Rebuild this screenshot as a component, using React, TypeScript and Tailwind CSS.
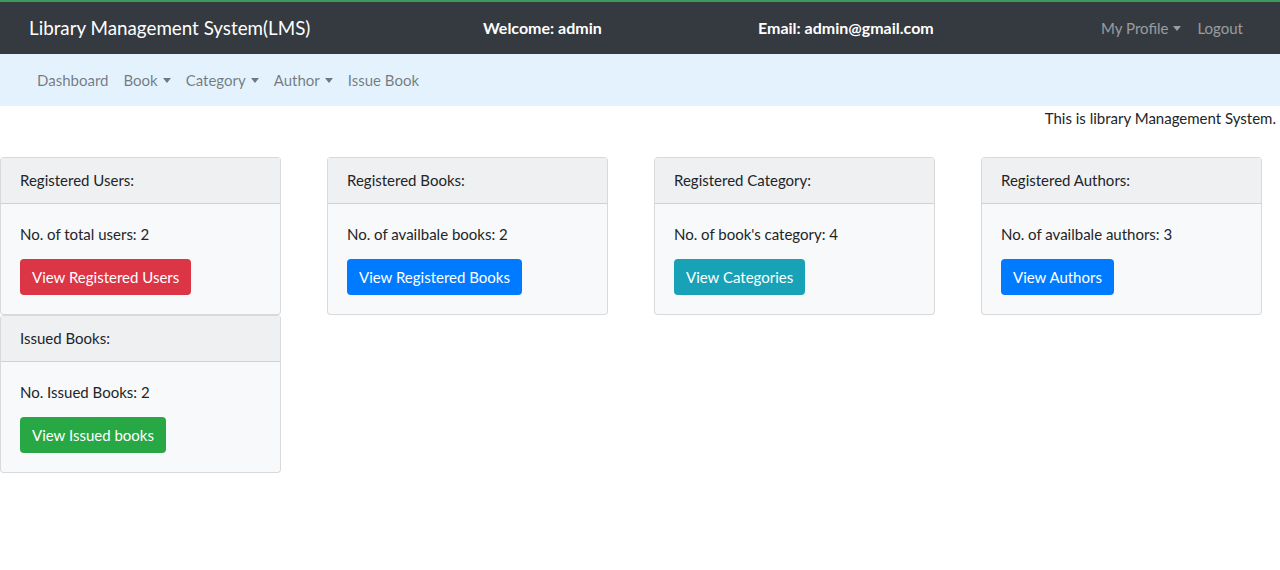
import React from "react";

const font = { fontFamily: "Lato, 'Open Sans', sans-serif" };

function Caret({ light }: { light?: boolean }) {
  return (
    <span
      className={`ml-[5px] inline-block h-0 w-0 border-x-[4.5px] border-t-[5px] border-x-transparent align-[3px] ${
        light ? "border-t-white/50" : "border-t-black/50"
      }`}
    />
  );
}

type CardProps = {
  title: string;
  text: string;
  button: string;
  color: string;
};

function StatCard({ title, text, button, color }: CardProps) {
  return (
    <div className="w-[281px] rounded-[4px] border border-black/[0.125] bg-[#f8f9fa]">
      <div className="h-[46px] border-b border-black/[0.125] bg-[#eff0f2] px-[19px] pt-[11px] text-[15px] leading-[22px] text-[#212529]">
        {title}
      </div>
      <div className="px-[19px] pb-[19px] pt-[19px]">
        <p className="text-[15px] leading-[22px] text-[#212529]">{text}</p>
        <button
          className={`mt-[14px] h-[36px] rounded-[4px] px-[12px] text-[15px] text-white ${color}`}
        >
          {button}
        </button>
      </div>
    </div>
  );
}

export default function App() {
  const cards: CardProps[] = [
    { title: "Registered Books:", text: "No. of availbale books: 2", button: "View Registered Books", color: "bg-[#007bff]" },
    { title: "Registered Category:", text: "No. of book's category: 4", button: "View Categories", color: "bg-[#17a2b8]" },
    { title: "Registered Authors:", text: "No. of availbale authors: 3", button: "View Authors", color: "bg-[#007bff]" },
  ];

  return (
    <div className="min-h-[570px] bg-white" style={font}>
      <div className="h-[2px] bg-[#3d9a5a]" />
      <nav className="flex h-[52px] items-center bg-[#343a40] pl-[29px] pr-[37px]">
        <span className="w-[454px] text-[18.8px] text-white">Library Management System(LMS)</span>
        <span className="w-[275px] text-[16px] font-bold text-white">Welcome: admin</span>
        <span className="text-[16px] font-bold text-white">Email: admin@gmail.com</span>
        <div className="ml-auto flex items-center gap-[16px] text-[15px] text-white/50">
          <span>
            My Profile
            <Caret light />
          </span>
          <span>Logout</span>
        </div>
      </nav>
      <nav className="flex h-[52px] items-center gap-[15px] bg-[#e3f2fd] pl-[37px] text-[15px] text-black/50">
        <span>Dashboard</span>
        <span>
          Book
          <Caret />
        </span>
        <span>
          Category
          <Caret />
        </span>
        <span>
          Author
          <Caret />
        </span>
        <span>Issue Book</span>
      </nav>
      <p className="pr-[4px] pt-[1px] text-right text-[15px] leading-[22px] text-[#212529]">
        This is library Management System.
      </p>
      <div className="mt-[28px] flex items-start gap-[46px]">
        <div className="flex flex-col">
          <StatCard
            title="Registered Users:"
            text="No. of total users: 2"
            button="View Registered Users"
            color="bg-[#dc3545]"
          />
          <StatCard
            title="Issued Books:"
            text="No. Issued Books: 2"
            button="View Issued books"
            color="bg-[#28a745]"
          />
        </div>
        {cards.map((c) => (
          <StatCard key={c.title} {...c} />
        ))}
      </div>
    </div>
  );
}
